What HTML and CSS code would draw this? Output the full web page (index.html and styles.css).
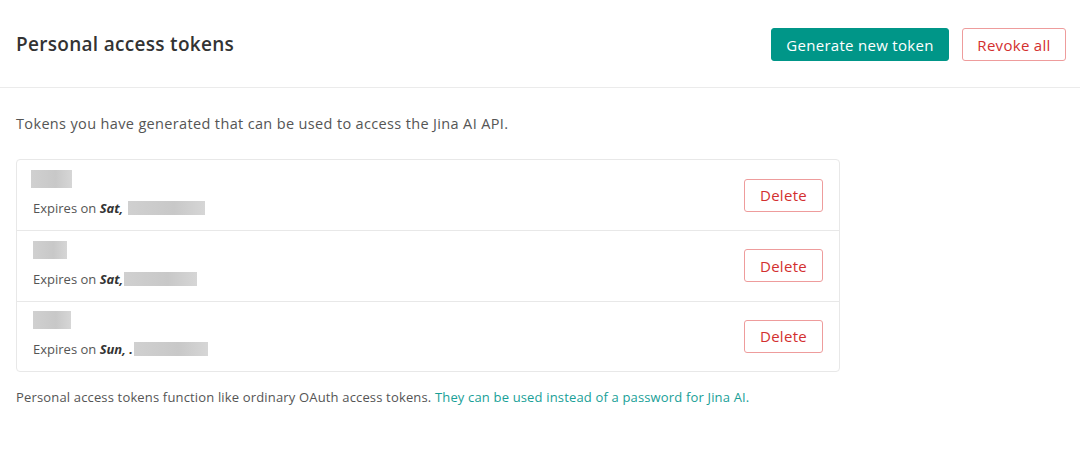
FILE: index.html
```html
<!DOCTYPE html>
<html lang="en">
<head>
<meta charset="utf-8">
<title>Personal access tokens</title>
<link rel="stylesheet" href="styles.css">
</head>
<body>
<header class="header">
  <h1 class="title">Personal access tokens</h1>
  <div class="actions">
    <button class="btn btn-primary">Generate new token</button>
    <button class="btn btn-outline btn-revoke">Revoke all</button>
  </div>
</header>
<main class="content">
  <p class="intro">Tokens you have generated that can be used to access the Jina AI API.</p>
  <div class="card">
    <div class="row">
      <div class="info">
        <span class="blur blur-name" style="width:41px"></span>
        <div class="expires">Expires on <b>Sat,</b> <span class="blur blur-date" style="width:77px"></span></div>
      </div>
      <button class="btn btn-outline btn-delete">Delete</button>
    </div>
    <div class="row">
      <div class="info">
        <span class="blur blur-name" style="width:34px;margin-left:2px"></span>
        <div class="expires">Expires on <b>Sat,</b><span class="blur blur-date" style="width:73px"></span></div>
      </div>
      <button class="btn btn-outline btn-delete">Delete</button>
    </div>
    <div class="row">
      <div class="info">
        <span class="blur blur-name" style="width:38px;margin-left:2px"></span>
        <div class="expires">Expires on <b>Sun, .</b><span class="blur blur-date" style="width:74px"></span></div>
      </div>
      <button class="btn btn-outline btn-delete">Delete</button>
    </div>
  </div>
  <p class="note">Personal access tokens function like ordinary OAuth access tokens. <a href="#" class="link">They can be used instead of a password for Jina AI.</a></p>
</main>
</body>
</html>
```
FILE: styles.css
```css
* { box-sizing: border-box; }
body {
  margin: 0;
  font-family: "Open Sans", "DejaVu Sans", sans-serif;
  color: #333;
  background: #fff;
}
.header {
  height: 88px;
  display: flex;
  align-items: center;
  justify-content: space-between;
  padding: 0 14px 0 16px;
  border-bottom: 1px solid #ebebeb;
}
.title {
  margin: 0;
  font-size: 19px;
  font-weight: 600;
  color: #333;
  letter-spacing: 0.3px;
}
.actions {
  display: flex;
  gap: 13px;
  margin-top: 2px;
}
.btn {
  height: 33px;
  font-family: inherit;
  font-size: 15px;
  letter-spacing: 0.3px;
  border-radius: 3px;
  padding: 0;
  white-space: nowrap;
  cursor: pointer;
  background: #fff;
}
.btn-primary {
  background: #009688;
  color: #fff;
  border: 1px solid #009688;
  width: 178px;
}
.btn-outline {
  color: #d32f2f;
  border: 1px solid #ee9c9c;
}
.btn-revoke {
  width: 104px;
}
.content {
  padding: 0 16px;
}
.intro {
  margin: 26px 0 0;
  font-size: 14.5px;
  letter-spacing: 0.35px;
  color: #555;
  line-height: 20px;
}
.card {
  margin-top: 25px;
  width: 824px;
  border: 1px solid #e8e8e8;
  border-radius: 4px;
}
.row {
  height: 70.3px;
  display: flex;
  align-items: center;
  justify-content: space-between;
  padding: 0 16px 0 14px;
}
.row + .row {
  border-top: 1px solid #e8e8e8;
}
.info {
  display: flex;
  flex-direction: column;
  align-items: flex-start;
  gap: 11px;
  margin-top: -3px;
}
.blur {
  display: inline-block;
  background: linear-gradient(90deg, #d0d0d0, #c8c8c8 60%, #d6d6d6);
}
.blur-name {
  height: 18px;
}
.blur-date {
  height: 14px;
  vertical-align: -2px;
  margin-left: 1px;
}
.expires {
  font-size: 13px;
  color: #555;
  padding-left: 2px;
}
.expires b {
  font-style: italic;
  font-weight: 700;
  color: #333;
}
.btn-delete {
  width: 79px;
  height: 33px;
}
.note {
  margin: 16px 0 0;
  font-size: 13px;
  letter-spacing: 0.16px;
  color: #555;
}
.link {
  color: #18a097;
  text-decoration: none;
}
```
